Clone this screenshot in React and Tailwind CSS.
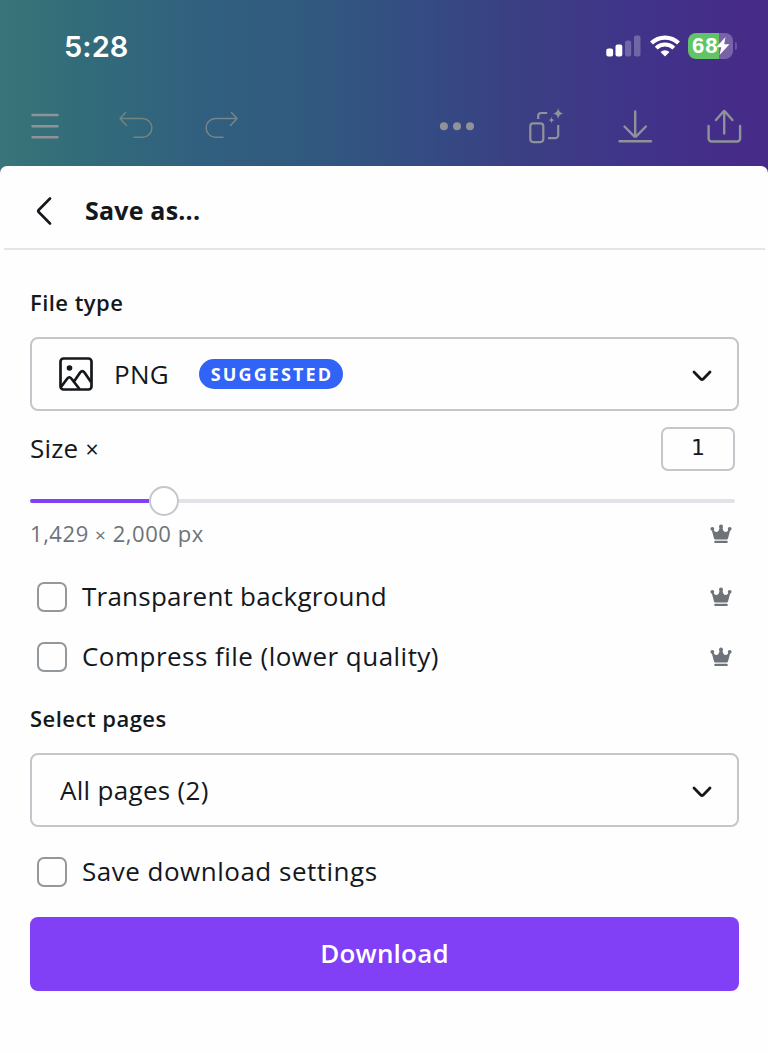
import React from "react";
import clsx from "clsx";

const options = [
  { name: "Transparent background", tracking: "tracking-[0.23px]" },
  { name: "Compress file (lower quality)", tracking: "tracking-[0.47px]" },
];

const ToolIcon = ({ className, children }) => (
  <svg
    width="36"
    height="36"
    viewBox="0 0 36 36"
    fill="none"
    stroke="currentColor"
    strokeWidth="2"
    strokeLinecap="round"
    strokeLinejoin="round"
    className={clsx("shrink-0", className)}
  >
    {children}
  </svg>
);

const CrownIcon = () => (
  <svg width="22" height="20" viewBox="0 0 22 20" fill="#6d7378" className="shrink-0">
    <circle cx="11" cy="2.600" r="2" />
    <circle cx="2.300" cy="4.800" r="1.900" />
    <circle cx="19.700" cy="4.800" r="1.900" />
    <path d="M1.500 5 4 14.500Q4.300 15.500 5.300 15.500h11.400q1 0 1.300-1L20.500 5 18.800 5.500Q17.300 8 15.600 8 13 8 12.300 3h-2.600Q9 8 6.400 8 4.700 8 3.200 5.500z" />
    <rect x="4.300" y="16.700" width="13.400" height="2.400" rx=".8" />
  </svg>
);

const ChevronDown = () => (
  <svg width="20" height="12" viewBox="0 0 20 12" fill="none" className="shrink-0">
    <path
      d="M2 2 8.800 8.900Q10 10.100 11.200 8.900L18 2"
      stroke="#14181d"
      strokeWidth="2.800"
      strokeLinecap="round"
    />
  </svg>
);

const Checkbox = ({ checked, onChange, children, className }) => (
  <label className={clsx("flex items-center", className)}>
    <input type="checkbox" className="sr-only" checked={checked} onChange={onChange} />
    <span
      className={clsx(
        "mr-[15px] size-[30px] shrink-0 rounded-[7px] border-2 border-[#93989d]",
        checked && "bg-[#8140f5]"
      )}
    />
    {children}
  </label>
);

const StatusBar = () => (
  <div className="flex h-[92px] items-center pl-[64px] pr-[31px] text-white">
    <span className="font-[Inter,sans-serif] text-[29px] font-semibold leading-none tracking-[0.1px]">
      5:28
    </span>
    <div className="ml-auto flex items-center">
      <svg width="36" height="24" viewBox="0 0 36 24" fill="#fff">
        <rect x=".3" y="14.500" width="6.800" height="8" rx="2" />
        <rect x="9.500" y="10.500" width="6.800" height="12" rx="2" />
        <rect x="19" y="6.500" width="6.200" height="16" rx="2" fillOpacity=".25" />
        <rect x="28" y="1.500" width="6.500" height="21" rx="2" fillOpacity=".25" />
      </svg>
      <svg width="30" height="24" viewBox="0 0 30 24" fill="none" stroke="#fff" className="ml-[8px]">
        <path d="M1.500 9.100a19.200 19.200 0 0 1 27 0" strokeWidth="4.200" />
        <path d="M6.200 14.100a12.500 12.500 0 0 1 17.600 0" strokeWidth="4" />
        <path d="M15 22.500 10.500 18a6.500 6.500 0 0 1 9 0z" fill="#fff" stroke="none" />
      </svg>
      <div className="ml-[8px] flex h-[26px] w-[45px] items-center rounded-[8px] bg-[linear-gradient(90deg,#62c466_0_31px,#7963a8_31px)] pl-[4px]">
        <span className="font-['Liberation_Sans',sans-serif] text-[22px] font-bold leading-none tracking-[1px]">
          68
        </span>
        <svg width="14" height="18" viewBox="0 0 14 18" fill="#fff" className="-ml-[2px] shrink-0">
          <path d="M9.500 0 .3 10.300h5L3.500 18l10-10.800H8.200z" />
        </svg>
      </div>
      <span className="ml-[2px] h-[8px] w-[2px] rounded-r-full bg-[#6b55a0]" />
    </div>
  </div>
);

const Toolbar = () => (
  <div className="flex h-[68px] items-center pl-[27px] text-[#8f9399]">
    <ToolIcon>
      <path d="M5.500 7h25M5.500 18.200h25M5.500 29.300h25" strokeWidth="2.500" />
    </ToolIcon>
    <ToolIcon className="ml-[55px] text-[#718680]">
      <path d="M7.500 4.500 2 10.500l6.500 7M2 10.500h22.500a9.400 9.400 0 0 1 0 18.800H16" strokeWidth="1.500" />
    </ToolIcon>
    <ToolIcon className="ml-[50px] text-[#74858b]">
      <path d="M27.500 4.500 33 10.500l-6.500 7M33 10.500H11.500a9.400 9.400 0 0 0 0 18.800H19" strokeWidth="1.500" />
    </ToolIcon>
    <ToolIcon className="ml-[199px]">
      <g fill="currentColor" stroke="none">
        <circle cx="4.900" cy="18.300" r="4" />
        <circle cx="18" cy="18.300" r="4" />
        <circle cx="31" cy="18.300" r="4" />
      </g>
    </ToolIcon>
    <ToolIcon className="ml-[53px]">
      <rect x="2.300" y="15.300" width="13" height="18.800" rx="3" strokeWidth="2.200" />
      <path d="M10.200 11V8a3 3 0 0 1 3-3h6M30.200 17v10.200a3 3 0 0 1-3 3H20" strokeWidth="2.200" strokeLinecap="butt" />
      <g fill="currentColor" stroke="none">
        <path d="M30.200 0c.8 3.500 1.800 4.500 5 5.400-3.200.9-4.200 1.900-5 5.300-.8-3.400-1.800-4.400-5-5.300 3.200-.9 4.200-1.900 5-5.400z" />
        <path d="M23.500 8.900c.5 2 1.100 2.600 3.200 3.200-2.100.6-2.700 1.200-3.200 3.200-.5-2-1.100-2.600-3.200-3.200 2.100-.6 2.700-1.200 3.200-3.200z" />
      </g>
    </ToolIcon>
    <ToolIcon className="ml-[53px]">
      <path d="M18.200 3.500v25M7.500 18.500l9.200 9.300q1.500 1.500 3 0l9.200-9.300M2.500 33.300h31.500" strokeWidth="2.400" />
    </ToolIcon>
    <ToolIcon className="ml-[53px]">
      <path d="M18.200 3v22.500M10 12l7.200-8.300q1-1 2 0l7.200 8.300M2.600 18v12.500a3 3 0 0 0 3 3h25.500a3 3 0 0 0 3-3V18" strokeWidth="2.400" />
    </ToolIcon>
  </div>
);

const App = () => {
  const [Checked, setChecked] = React.useState([]);
  const [Size, setSize] = React.useState("1");

  const toggle = (name) => {
    setChecked(
      Checked.includes(name) ? Checked.filter((c) => c !== name) : [...Checked, name]
    );
  };

  return (
    <div className="h-[1053px] w-[768px] overflow-hidden bg-[linear-gradient(90deg,#39757a_0px,#326c79_80px,#31607f_200px,#31597f_310px,#344b83_430px,#3b3f83_520px,#41328a_650px,#462a87_768px)] font-['Open_Sans',sans-serif] text-[#14181d]">
      <StatusBar />
      <Toolbar />

      <div className="mt-[6px] h-[887px] rounded-t-[7px] bg-[#fefefe]">
        <div className="ml-[4px] mr-[3px] flex h-[84px] items-center border-b-2 border-[#e4e4ea] pl-[32px] pt-[8px]">
          <svg width="16" height="28" viewBox="0 0 16 28" fill="none">
            <path
              d="M14 1.500 2.700 13q-1 1 0 2L14 26.500"
              stroke="#14181d"
              strokeWidth="2.600"
              strokeLinecap="round"
            />
          </svg>
          <h1 className="mb-[2px] ml-[33px] text-[25px] font-bold leading-[34px] tracking-[0.2px]">
            Save as...
          </h1>
        </div>

        <div className="pl-[30px] pr-[29px]">
          <h2 className="mt-[36px] h-[32px] text-[22px] font-semibold leading-[32px] tracking-[0.45px]">
            File type
          </h2>
          <button
            type="button"
            className="mt-[19px] flex h-[74px] w-full items-center rounded-[8px] border-2 border-[#c3c6cb] pl-[27px] pr-[25px]"
          >
            <svg width="34" height="34" viewBox="0 0 34 34" fill="none" stroke="#14181d" strokeWidth="2.700">
              <rect x="1.500" y="1.500" width="31" height="31" rx="3" />
              <circle cx="10.500" cy="11" r="2.800" fill="#14181d" stroke="none" />
              <path d="M2 30 8.300 21.500q2-2.500 4 0L20.500 32M15 24.500 21.300 15.300q2-2.500 4 0L32 25" />
            </svg>
            <span className="ml-[21px] w-[56px] text-left text-[26px] leading-[36px] tracking-[0.3px]">
              PNG
            </span>
            <span className="ml-[29px] flex h-[30px] w-[144px] items-center justify-center rounded-full bg-[#3163f7] pl-[2px] pt-px text-[18px] font-bold tracking-[2.1px] text-white">
              SUGGESTED
            </span>
            <span className="ml-auto mt-[4px]">
              <ChevronDown />
            </span>
          </button>

          <div className="mr-[4px] mt-[16px] flex h-[44px] items-center justify-between">
            <span className="mb-[2px] text-[26px] leading-[36px] tracking-[0.2px]">
              Size <span className="text-[23px]">×</span>
            </span>
            <input
              type="text"
              aria-label="Size"
              value={Size}
              onChange={(e) => setSize(e.target.value)}
              className="h-[44px] w-[74px] rounded-[7px] border-2 border-[#c3c6cb] pb-[3px] text-center font-['DejaVu_Sans',sans-serif] text-[22px]"
            />
          </div>

          <div className="mr-[4px] mt-[15px] flex h-[30px] items-center">
            <span className="h-[4px] w-[119px] rounded-l-full bg-[#8140f5]" />
            <span className="size-[30px] rounded-full border-2 border-[#c3c6cb] bg-white" />
            <span className="h-[4px] flex-1 rounded-r-full bg-[#e2e2e8]" />
          </div>

          <div className="mr-[7px] mt-[2px] flex h-[32px] items-center justify-between">
            <span className="text-[22px] leading-[32px] tracking-[0.55px] text-[#6d7378]">
              1,429 <span className="text-[19px]">×</span> 2,000 px
            </span>
            <CrownIcon />
          </div>

          <div className="mt-[17px]">
            {options.map((option) => (
              <div
                key={option.name}
                className="ml-[7px] mr-[7px] flex h-[60px] items-center justify-between"
              >
                <Checkbox checked={Checked.includes(option.name)} onChange={() => toggle(option.name)}>
                  <span className={clsx("mb-[2px] text-[26px] leading-[36px]", option.tracking)}>
                    {option.name}
                  </span>
                </Checkbox>
                <CrownIcon />
              </div>
            ))}
          </div>

          <h2 className="mt-[15px] h-[32px] text-[22px] font-semibold leading-[32px] tracking-[0.48px]">
            Select pages
          </h2>
          <button
            type="button"
            className="mt-[19px] flex h-[74px] w-full items-center justify-between rounded-[8px] border-2 border-[#c3c6cb] pl-[28px] pr-[25px]"
          >
            <span className="text-[26px] leading-[36px] tracking-[0.3px]">All pages (2)</span>
            <span className="mt-[4px]">
              <ChevronDown />
            </span>
          </button>

          <Checkbox
            className="ml-[7px] mt-[15px] h-[60px]"
            checked={Checked.includes("save")}
            onChange={() => toggle("save")}
          >
            <span className="mb-[2px] text-[26px] leading-[36px] tracking-[0.5px]">
              Save download settings
            </span>
          </Checkbox>

          <button
            type="button"
            className="mt-[15px] h-[74px] w-full rounded-[8px] bg-[#8140f5] pb-[2px] text-[26px] font-semibold tracking-[0.2px] text-white"
          >
            Download
          </button>
        </div>
      </div>
    </div>
  );
};

export default App;
